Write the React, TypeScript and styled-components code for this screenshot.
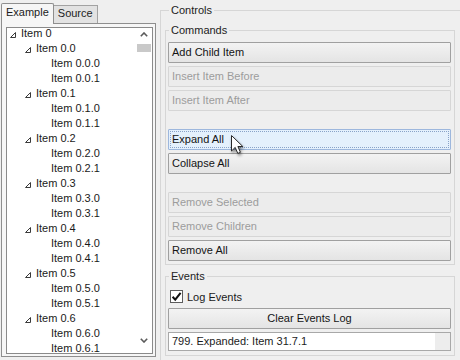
import React, { FC } from 'react';
import styled, { createGlobalStyle, css } from 'styled-components';

const GlobalStyle = createGlobalStyle`
    html, body {
        margin: 0;
        padding: 0;
        background: #efefef;
        overflow: hidden;
    }
    body {
        font-family: 'Liberation Sans', Arial, sans-serif;
        font-size: 11px;
        color: #1c1c1c;
    }
`;

type TreeRow = { label: string; level: number; expandable: boolean };

const buildRows = (): TreeRow[] => {
    const rows: TreeRow[] = [{ label: 'Item 0', level: 0, expandable: true }];
    for (let i = 0; i < 7; i++) {
        rows.push({ label: `Item 0.${i}`, level: 1, expandable: true });
        rows.push({ label: `Item 0.${i}.0`, level: 2, expandable: false });
        rows.push({ label: `Item 0.${i}.1`, level: 2, expandable: false });
    }
    return rows;
};

const Triangle: FC = () => (
    <svg width="6" height="6" viewBox="0 0 6 6">
        <path d="M0.5 5.5 L5.5 5.5 L5.5 0.5 Z" fill="none" stroke="#3a3a3a" strokeWidth="1" />
    </svg>
);

const Chevron: FC<{ down?: boolean }> = ({ down }) => (
    <svg width="8" height="5" viewBox="0 0 8 5">
        <path
            d={down ? 'M0.8 0.8 L4 4 L7.2 0.8' : 'M0.8 4.2 L4 1 L7.2 4.2'}
            fill="none"
            stroke="#5a5a5a"
            strokeWidth="1.6"
        />
    </svg>
);

const Cursor: FC = () => (
    <svg width="16" height="22" viewBox="0 0 16 22">
        <path
            d="M0.5 0.5 L0.5 16 L4.2 12.4 L6.8 18.4 L9.4 17.3 L6.9 11.5 L11.8 11.5 Z"
            fill="#ffffff"
            stroke="#2a2a2a"
            strokeWidth="1"
            strokeLinejoin="round"
        />
    </svg>
);

const Button: FC<{ label: string; disabled?: boolean; hover?: boolean; center?: boolean }> = ({
    label,
    disabled,
    hover,
    center,
}) => (
    <PushButton $disabled={disabled} $hover={hover} $center={center}>
        {label}
        {hover && (
            <CursorWrap>
                <Cursor />
            </CursorWrap>
        )}
    </PushButton>
);

const App: FC = () => {
    const rows = buildRows();

    return (
        <Page>
            <GlobalStyle />
            <LeftPane>
                <TabBar>
                    <Tab $active>Example</Tab>
                    <Tab>Source</Tab>
                </TabBar>
                <TabPanel>
                    <TreeBox>
                        <TreeList>
                            {rows.map(row => (
                                <Row key={row.label} $level={row.level}>
                                    <Toggle>{row.expandable && <Triangle />}</Toggle>
                                    {row.label}
                                </Row>
                            ))}
                        </TreeList>
                        <ScrollBar>
                            <ScrollArrow>
                                <Chevron />
                            </ScrollArrow>
                            <Thumb />
                            <ScrollTrack />
                            <ScrollArrow $down>
                                <Chevron down />
                            </ScrollArrow>
                        </ScrollBar>
                    </TreeBox>
                </TabPanel>
            </LeftPane>
            <RightPane>
                <ControlsBox>
                    <GroupTitle $indent={4}>Controls</GroupTitle>
                    <GroupBox>
                        <GroupTitle $indent={3}>Commands</GroupTitle>
                        <GroupBody>
                            <Button label="Add Child Item" />
                            <Button label="Insert Item Before" disabled />
                            <Button label="Insert Item After" disabled />
                            <Spacer />
                            <Button label="Expand All" hover />
                            <Button label="Collapse All" />
                            <Spacer />
                            <Button label="Remove Selected" disabled />
                            <Button label="Remove Children" disabled />
                            <Button label="Remove All" />
                        </GroupBody>
                    </GroupBox>
                    <GroupBox $gapTop={11}>
                        <GroupTitle $indent={3}>Events</GroupTitle>
                        <GroupBody $bottom={4}>
                            <CheckRow>
                                <CheckBox>
                                    <svg width="11" height="11" viewBox="0 0 11 11">
                                        <path
                                            d="M1.6 5.8 L4.2 8.6 L9.6 1.8"
                                            fill="none"
                                            stroke="#111"
                                            strokeWidth="2"
                                        />
                                    </svg>
                                </CheckBox>
                                Log Events
                            </CheckRow>
                            <Button label="Clear Events Log" center />
                            <LogField>
                                <LogText>799. Expanded: Item 31.7.1</LogText>
                                <LogStrip />
                            </LogField>
                        </GroupBody>
                    </GroupBox>
                </ControlsBox>
            </RightPane>
        </Page>
    );
};

export default App;

const Page = styled.div`
    display: flex;
    width: 460px;
    height: 360px;
    overflow: hidden;
`;

const LeftPane = styled.div`
    width: 156px;
    flex: none;
    box-sizing: border-box;
    padding: 3px 0 3px 1px;
    display: flex;
    flex-direction: column;
`;

const TabBar = styled.div`
    display: flex;
    align-items: flex-end;
    height: 20px;
    position: relative;
    z-index: 1;
`;

const Tab = styled.div<{ $active?: boolean }>`
    box-sizing: border-box;
    padding: 0 4px;
    border: 1px solid #a2a2a2;
    border-bottom: none;
    white-space: nowrap;
    ${p =>
        p.$active
            ? css`
                  height: 21px;
                  margin-bottom: -1px;
                  padding-top: 1px;
                  line-height: 14px;
                  background: #f6f6f6;
                  border-color: #8e8e8e;
                  border-radius: 2px 2px 0 0;
              `
            : css`
                  height: 18px;
                  line-height: 14px;
                  background: #e2e2e2;
                  border-left: none;
              `}
`;

const TabPanel = styled.div`
    flex: 1;
    box-sizing: border-box;
    border: 1px solid #8e8e8e;
    background: #f6f6f6;
    padding: 3px 2px 2px 4px;
    display: flex;
    min-height: 0;
`;

const TreeBox = styled.div`
    flex: 1;
    display: flex;
    border: 1px solid #8a8a8a;
    background: #ffffff;
    overflow: hidden;
    min-height: 0;
`;

const TreeList = styled.div`
    flex: 1;
    overflow: hidden;
`;

const Row = styled.div<{ $level: number }>`
    display: flex;
    align-items: flex-start;
    height: 15px;
    line-height: 11px;
    padding-left: ${p => 3 + p.$level * 15}px;
    white-space: nowrap;
    color: #1a1a1a;
`;

const Toggle = styled.span`
    width: 11px;
    flex: none;
    display: flex;
    padding-top: 4px;
`;

const ScrollBar = styled.div`
    width: 15px;
    flex: none;
    display: flex;
    flex-direction: column;
`;

const ScrollArrow = styled.div<{ $down?: boolean }>`
    height: 16px;
    display: flex;
    justify-content: center;
    box-sizing: border-box;
    padding-right: 1px;
    align-items: ${p => (p.$down ? 'flex-start' : 'flex-end')};
    padding-top: ${p => (p.$down ? '1px' : '0')};
    padding-bottom: ${p => (p.$down ? '0' : '7px')};
`;

const Thumb = styled.div`
    height: 8px;
    margin-right: 1px;
    background: #c9c9c9;
`;

const ScrollTrack = styled.div`
    flex: 1;
`;

const RightPane = styled.div`
    flex: 1;
    padding: 10px 0 0 4px;
`;

const ControlsBox = styled.div`
    border: 1px solid #d6d6d6;
    border-bottom: none;
    margin-right: -10px;
    height: 360px;
    box-sizing: border-box;
    padding: 0 14px 0 4px;
`;

const GroupTitle = styled.div<{ $indent: number }>`
    width: fit-content;
    margin: -7px 0 0 ${p => p.$indent}px;
    padding: 0 2px;
    line-height: 13px;
    background: #efefef;
    color: #222;
`;

const GroupBox = styled.div<{ $gapTop?: number }>`
    border: 1px solid #d6d6d6;
    margin-top: ${p => p.$gapTop ?? 13}px;
`;

const GroupBody = styled.div<{ $bottom?: number }>`
    display: flex;
    flex-direction: column;
    gap: 3px;
    padding: 5px 3px ${p => p.$bottom ?? 3}px 2px;
`;

const Spacer = styled.div`
    height: 12px;
`;

const PushButton = styled.div<{ $disabled?: boolean; $hover?: boolean; $center?: boolean }>`
    position: relative;
    box-sizing: border-box;
    height: 21px;
    line-height: 19px;
    padding: 0 3px;
    border: 1px solid #a0a0a0;
    border-radius: 1px;
    background: linear-gradient(#f3f3f3, #e4e4e4);
    color: #141414;
    text-align: ${p => (p.$center ? 'center' : 'left')};
    white-space: nowrap;
    ${p =>
        p.$disabled &&
        css`
            border-color: #d6d6d6;
            background: #ececec;
            color: #9c9c9c;
        `}
    ${p =>
        p.$hover &&
        css`
            border-color: #9db7dd;
            background: #e4f0fc;
            &::after {
                content: '';
                position: absolute;
                inset: 1px;
                border: 1px dotted #8aa3c8;
            }
        `}
`;

const CursorWrap = styled.div`
    position: absolute;
    left: 62px;
    top: 5px;
    z-index: 2;
    filter: drop-shadow(1px 2px 1.5px rgba(0, 0, 0, 0.45));
    line-height: 0;
`;

const CheckRow = styled.div`
    display: flex;
    align-items: center;
    gap: 4px;
    height: 17px;
    margin: 0 0 0 2px;
    color: #1a1a1a;
`;

const CheckBox = styled.div`
    width: 13px;
    height: 13px;
    box-sizing: border-box;
    border: 1px solid #5c5c5c;
    background: #ffffff;
    display: flex;
    align-items: center;
    justify-content: center;
`;

const LogField = styled.div`
    display: flex;
    height: 19px;
    box-sizing: border-box;
    border: 1px solid #a8a8a8;
`;

const LogText = styled.div`
    flex: 1;
    background: #ffffff;
    line-height: 17px;
    padding-left: 3px;
    white-space: nowrap;
    overflow: hidden;
`;

const LogStrip = styled.div`
    width: 15px;
    background: #ededed;
`;
